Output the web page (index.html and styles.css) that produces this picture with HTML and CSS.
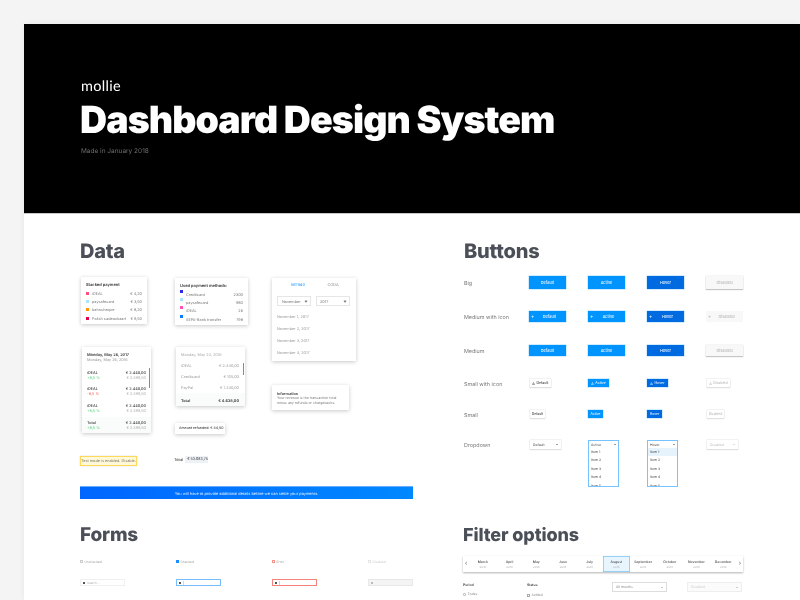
FILE: index.html
```html
<!DOCTYPE html>
<html lang="en">
<head>
<meta charset="utf-8">
<title>Mollie Dashboard Design System</title>
<link rel="stylesheet" href="styles.css">
</head>
<body>
<div class="sheet">
  <header class="hero">
    <div class="logo">mollie</div>
    <h1 class="title">Dashboard Design System</h1>
    <p class="made">Made in January 2018</p>
  </header>
  <main class="content">
    <section class="col-left">
      <h2 class="heading">Data</h2>
      <div class="data-grid">
        <div class="data-col data-col-a">
          <div class="card card-stacked">
            <div class="card-title">Stacked payment</div>
            <div class="row"><span class="dot dot-pink"></span><span class="grow">iDEAL</span><span>€ 4,20</span></div>
            <div class="row"><span class="dot dot-sky"></span><span class="grow">paysafecard</span><span>€ 3,50</span></div>
            <div class="row"><span class="dot dot-orange"></span><span class="grow">bahncheque</span><span>€ 8,20</span></div>
            <div class="row"><span class="dot dot-red"></span><span class="grow">Polish cadeaukaart</span><span>€ 9,50</span></div>
          </div>
          <div class="card card-day">
            <div class="day-strong">Monday, May 26, 2017</div>
            <div class="day-sub">Monday, May 26, 2016</div>
            <div class="day-row"><div class="line strong"><span>iDEAL</span><span>€ 2.440,00</span></div><div class="line sub"><span class="up">+8,5 %</span><span>€ 2.399,50</span></div></div>
            <div class="day-row"><div class="line strong"><span>iDEAL</span><span>€ 2.440,00</span></div><div class="line sub"><span class="down">-8,5 %</span><span>€ 2.399,50</span></div></div>
            <div class="day-row"><div class="line strong"><span>iDEAL</span><span>€ 2.440,00</span></div><div class="line sub"><span class="up">+8,5 %</span><span>€ 2.399,50</span></div></div>
            <div class="day-total"><div class="line strong"><span>Total</span><span>€ 2.440,00</span></div><div class="line sub"><span class="up">+8,5 %</span><span>€ 2.399,50</span></div></div>
            <span class="scroll scroll-day"></span>
          </div>
          <div class="notice">Test mode is enabled. Disable.</div>
        </div>
        <div class="data-col data-col-b">
          <div class="card card-used">
            <div class="card-title">Used payment methods:</div>
            <div class="row"><span class="dot dot-indigo"></span><span class="grow">Creditcard</span><span>2300</span></div>
            <div class="row"><span class="dot dot-sky"></span><span class="grow">paysafecard</span><span>980</span></div>
            <div class="row"><span class="dot dot-magenta"></span><span class="grow">iDEAL</span><span>26</span></div>
            <div class="row"><span class="dot dot-blue"></span><span class="grow">SEPA-Bank transfer</span><span>798</span></div>
          </div>
          <div class="card card-muted">
            <div class="muted-date">Monday, May 24, 2016</div>
            <div class="muted-row"><span>iDEAL</span><span>€ 2.440,00</span></div>
            <div class="muted-row"><span>Creditcard</span><span>€ 105,00</span></div>
            <div class="muted-row"><span>PayPal</span><span>€ 1.240,00</span></div>
            <div class="muted-total"><span>Total</span><span>€ 4.638,00</span></div>
            <span class="scroll scroll-muted"></span>
          </div>
          <div class="card tooltip">Amount refunded: € 84,50</div>
          <div class="total-line"><span>Total</span><span class="chip">€ 53.083,75</span></div>
        </div>
        <div class="data-col data-col-c">
          <div class="card card-export">
            <div class="tabs"><span class="tab-on">MT940</span><span>CODA</span></div>
            <div class="selects">
              <div class="mini-select mini-wide"><span>November</span><span class="chev"></span></div>
              <div class="mini-select"><span>2017</span><span class="chev"></span></div>
            </div>
            <div class="date-item">November 1, 2017</div>
            <div class="date-item">November 2, 2017</div>
            <div class="date-item">November 3, 2017</div>
            <div class="date-item">November 4, 2017</div>
          </div>
          <div class="card card-info">
            <div class="info-title">Information</div>
            <div class="info-text">Your revenue is the transaction total<br>minus any refunds or chargebacks.</div>
          </div>
        </div>
      </div>
      <div class="banner">You will have to provide additional details before we can settle your payments.</div>
      <h2 class="heading heading-forms">Forms</h2>
      <div class="forms-grid">
        <div class="check"><span class="box"></span>Unchecked</div>
        <div class="check"><span class="box box-on"></span>Checked</div>
        <div class="check"><span class="box box-err"></span>Error</div>
        <div class="check check-off"><span class="box box-off"></span>Disabled</div>
        <div class="field"><span class="mag"></span>Search...</div>
        <div class="field field-focus"><span class="mag"></span>|</div>
        <div class="field field-err"><span class="mag"></span>|</div>
        <div class="field field-off"><span class="mag mag-off"></span></div>
      </div>
    </section>
    <section class="col-right">
      <h2 class="heading heading-buttons">Buttons</h2>
      <div class="btn-table">
        <div class="btn-row row-big">
          <span class="label">Big</span>
          <button class="btn big">Default</button><button class="btn big">Active</button><button class="btn big hover">Hover</button><button class="btn big off raised">Disabled</button>
        </div>
        <div class="btn-row row-medicon">
          <span class="label">Medium with icon</span>
          <button class="btn med"><span class="plus">+</span>Default</button><button class="btn med"><span class="plus">+</span>Active</button><button class="btn med hover"><span class="plus">+</span>Hover</button><button class="btn med off"><span class="plus">+</span>Disabled</button>
        </div>
        <div class="btn-row row-med">
          <span class="label">Medium</span>
          <button class="btn med">Default</button><button class="btn med">Active</button><button class="btn med hover">Hover</button><button class="btn med off raised">Disabled</button>
        </div>
        <div class="btn-row row-smicon">
          <span class="label">Small with icon</span>
          <button class="btn sm-icon white"><svg class="tri" viewBox="0 0 6 6"><path d="M3 1 5 5H1Z"/></svg>Default</button><button class="btn sm-icon"><svg class="tri" viewBox="0 0 6 6"><path d="M3 1 5 5H1Z"/></svg>Active</button><button class="btn sm-icon hover"><svg class="tri" viewBox="0 0 6 6"><path d="M3 1 5 5H1Z"/></svg>Hover</button><button class="btn sm-icon white off-sm"><svg class="tri" viewBox="0 0 6 6"><path d="M3 1 5 5H1Z"/></svg>Disabled</button>
        </div>
        <div class="btn-row row-sm">
          <span class="label">Small</span>
          <button class="btn sm white">Default</button><button class="btn sm">Active</button><button class="btn sm hover">Hover</button><button class="btn sm white off-sm">Disabled</button>
        </div>
        <div class="btn-row row-drop">
          <span class="label">Dropdown</span>
          <div class="drop"><div class="drop-head"><span>Default</span><span class="caret"></span></div></div>
          <div class="drop drop-open"><div class="drop-head"><span>Active</span><span class="caret"></span></div><div class="drop-item">Item 1</div><div class="drop-item">Item 2</div><div class="drop-item">Item 3</div><div class="drop-item">Item 4</div><div class="drop-item">Item 5</div></div>
          <div class="drop drop-open"><div class="drop-head"><span>Hover</span><span class="caret"></span></div><div class="drop-item drop-sel">Item 1</div><div class="drop-item">Item 2</div><div class="drop-item">Item 3</div><div class="drop-item">Item 4</div><div class="drop-item">Item 5</div></div>
          <div class="drop drop-off"><div class="drop-head"><span>Disabled</span><span class="caret"></span></div></div>
        </div>
      </div>
      <h2 class="heading heading-filter">Filter options</h2>
      <div class="months">
        <span class="arrow">‹</span>
        <div class="month"><b>March</b><i>2018</i></div>
        <div class="month"><b>April</b><i>2018</i></div>
        <div class="month"><b>May</b><i>2018</i></div>
        <div class="month"><b>June</b><i>2018</i></div>
        <div class="month"><b>July</b><i>2018</i></div>
        <div class="month month-on"><b>August</b><i>2018</i></div>
        <div class="month"><b>September</b><i>2018</i></div>
        <div class="month"><b>October</b><i>2018</i></div>
        <div class="month"><b>November</b><i>2018</i></div>
        <div class="month"><b>December</b><i>2018</i></div>
        <span class="arrow">›</span>
      </div>
      <div class="filters">
        <div class="filter-group"><div class="filter-title">Period</div><div class="radio"><span class="ring"></span>Today</div></div>
        <div class="filter-group filter-status"><div class="filter-title">Status</div><div class="radio radio-low"><span class="ring ring-sq"></span>Settled</div></div>
        <div class="filter-select"><span>All months</span><span class="caret caret-grey"></span></div>
        <div class="filter-select filter-off"><span>Disabled</span><span class="caret caret-grey"></span></div>
      </div>
    </section>
  </main>
</div>
</body>
</html>
```
FILE: styles.css
```css
* { box-sizing: border-box; }
html, body { margin: 0; height: 600px; overflow: hidden; }
body { background: #f4f4f4; font-family: Inter, "Liberation Sans", sans-serif; text-rendering: geometricPrecision; }
.sheet { margin: 24px 0 0 24px; background: #fff; height: 576px; box-shadow: 0 0 6px rgba(0,0,0,.06); overflow: hidden; }
.hero { background: #000; height: 190px; padding: 55px 0 0 57px; border-bottom: 1px solid #c9c9c9; color: #fff; }
.logo { font-family: Lato, sans-serif; font-size: 14.5px; line-height: 16px; letter-spacing: .3px; filter: blur(.25px); }
.title { margin: 4px 0 0 -1px; font-family: Inter, sans-serif; font-weight: 900; font-size: 37.5px; line-height: 43px; letter-spacing: -.92px; white-space: nowrap; filter: blur(.25px); }
.made { margin: 5px 0 0; font-size: 6.5px; line-height: 9px; color: #6d6d6d; filter: blur(.3px); }

.content { display: flex; padding-left: 56px; filter: blur(.3px); }
.col-left { width: 333px; flex: none; }
.col-right { width: 280px; flex: none; margin-left: 51px; }
.heading { margin: 26px 0 0; font-size: 20px; line-height: 22px; font-weight: 800; color: #4b4f57; letter-spacing: -.2px; }

.data-grid { display: grid; grid-template-columns: 95px 97px 1fr; margin-top: 15px; height: 209px; }
.data-col { display: flex; flex-direction: column; align-items: flex-start; }
.card { position: relative; background: #fff; box-shadow: 0 1px 4px rgba(0,0,0,.22); color: #777; font-size: 3.8px; }
.card-stacked { width: 66px; height: 47px; margin: 0 0 0 1px; padding: 5px; }
.card-title { color: #333; font-weight: 600; font-size: 4px; line-height: 5px; margin-bottom: 2px; }
.row { display: flex; align-items: center; height: 8.3px; gap: 3px; white-space: nowrap; }
.grow { flex: 1; }
.dot { width: 3px; height: 3px; flex: none; }
.dot-pink { background: #ff4f7b; }
.dot-sky { background: #a9e4ff; }
.dot-orange { background: #ff9800; }
.dot-red { background: #e6004c; }
.dot-indigo { background: #2a2ae8; transform: translateY(-3px); }
.dot-magenta { background: #ff4fb8; transform: translateY(-3px); }
.dot-blue { background: #0a7cff; transform: translateY(-3px); }
.card-used .dot-sky { transform: translateY(-3px); }
.card-used { width: 73px; height: 47px; margin: 1px 0 0 0; padding: 5px; }

.card-day { width: 69px; height: 86px; margin: 23px 0 0 2px; padding: 5px 5px 0; }
.day-strong { color: #333; font-weight: 600; font-size: 3.9px; line-height: 5px; }
.day-sub { color: #999; line-height: 5px; margin-bottom: 7.5px; }
.day-row { height: 16.5px; }
.line { display: flex; justify-content: space-between; line-height: 5px; white-space: nowrap; }
.line.strong { color: #333; font-weight: 500; }
.line.sub { color: #aaa; }
.up { color: #4fd27c; }
.down { color: #f0645a; }
.day-total { margin: -2px -5px 0; padding: 2.5px 5px 0; height: 16px; background: #fafbfb; }
.scroll { position: absolute; right: 1px; width: 1px; background: #8a8a8a; }
.scroll-day { top: 21px; height: 20px; }
.notice { margin: 23px 0 0; width: 57px; height: 10px; background: #fff8d9; border: 1px solid #ffd95c; font-size: 3.8px; line-height: 8px; text-align: center; color: #7c7560; white-space: nowrap; box-shadow: 0 0 2px rgba(0,0,0,.12); }

.card-muted { width: 69px; height: 59px; margin: 22px 0 0 1px; padding: 5px 6px 0 5px; color: #9a9a9a; }
.muted-date { line-height: 5px; margin-bottom: 6px; color: #aaa; }
.muted-row { display: flex; justify-content: space-between; height: 11px; line-height: 6px; white-space: nowrap; }
.muted-total { display: flex; justify-content: space-between; color: #444; font-weight: 700; margin: -3px -6px 0 -5px; padding: 4.5px 6px 0 5px; height: 13px; background: #fafbfb; white-space: nowrap; }
.scroll-muted { top: 16px; height: 12px; }
.tooltip { margin: 17px 0 0; width: 50px; height: 11px; padding-left: 4px; line-height: 11px; font-size: 3.5px; color: #444; font-weight: 500; white-space: nowrap; }
.total-line { display: flex; align-items: center; gap: 2px; margin: 22px 0 0 -1px; font-size: 3.9px; color: #444; font-weight: 500; }
.chip { background: #eef2f7; padding: 0 2px; height: 7px; line-height: 7px; width: 23px; white-space: nowrap; font-size: 3.6px; }

.card-export { width: 84px; height: 83px; margin-top: 1px; padding: 3px 6px 0 5px; color: #888; }
.tabs { display: flex; justify-content: space-around; height: 8px; line-height: 8px; padding-left: 3px; font-size: 3.9px; }
.tab-on { color: #2a9bff; font-weight: 500; }
.selects { display: flex; gap: 5px; margin-top: 7px; }
.mini-select { flex: 1; height: 10px; border: 1px solid #e6e6e6; display: flex; align-items: center; justify-content: space-between; padding: 0 3px; color: #777; }
.mini-wide { flex: none; width: 34px; padding-left: 4px; }
.chev { width: 2px; height: 2px; border-right: .6px solid #777; border-bottom: .6px solid #777; transform: rotate(45deg); }
.date-item { height: 12px; line-height: 12px; color: #9a9a9a; white-space: nowrap; }
.selects + .date-item { margin-top: 5px; }
.card-info { width: 77px; height: 25px; margin-top: 24px; padding: 6px 5px 0; color: #777; }
.info-title { color: #333; font-weight: 600; line-height: 5px; }
.info-text { line-height: 4.5px; white-space: nowrap; font-size: 3.5px; }

.banner { height: 13px; line-height: 13px; background: linear-gradient(90deg, #0066ff, #0088ff); border-top: 1px solid #66adff; color: #dcecff; font-size: 3.9px; text-align: center; white-space: nowrap; }
.heading-forms { margin-top: 25px; font-size: 19px; }
.forms-grid { display: grid; grid-template-columns: repeat(4, 45px); column-gap: 51px; row-gap: 15px; margin-top: 13px; }
.check { display: flex; align-items: center; gap: 2px; height: 5px; font-size: 3.2px; color: #999; white-space: nowrap; }
.check-off { color: #ccc; }
.box { width: 2.5px; height: 2.5px; border: .5px solid #ccc; flex: none; }
.box-on { background: #1b8fff; border-color: #1b8fff; }
.box-err { border-color: #f5938b; }
.box-off { border-color: #e5e5e5; }
.field { display: flex; align-items: center; gap: 2px; height: 7px; padding-left: 2px; border: 1px solid #f0f0f0; font-size: 3px; color: #aaa; }
.field-focus { border-color: #76bdff; color: #444; }
.field-err { border-color: #f5837b; color: #444; }
.field-off { background: #f4f4f4; border-color: #e8e8e8; }
.mag { width: 2px; height: 2px; background: #555; flex: none; }
.mag-off { background: #bbb; }

.btn-table { display: flex; flex-direction: column; margin-top: 14px; }
.btn-row { display: grid; grid-template-columns: 65px 59px 59px 59px 38px; align-items: start; }
.label { font-size: 5.4px; color: #777; white-space: nowrap; padding-top: 1.5px; }
.btn { display: flex; align-items: center; justify-content: center; margin: 0; padding: 0; border: 0; border-radius: 0; font-family: inherit; background: #0094ff; color: #eaf6ff; font-size: 3.9px; font-weight: 500; white-space: nowrap; box-shadow: 0 0 0 .5px #a8dbff; }
.hover { background: #006be0; }
.big { width: 37px; height: 13px; }
.med { width: 37px; height: 11px; position: relative; }
.off { background: #f8f8f8; color: #bbb; box-shadow: none; }
.raised { box-shadow: 0 1px 1px rgba(0,0,0,.2), 0 0 0 .5px #eee; }
.row-big { height: 35px; }
.row-big .label { line-height: 13px; }
.row-medicon { height: 34px; }
.row-medicon .label { line-height: 11px; }
.plus { position: absolute; left: 2px; font-size: 5px; line-height: 5px; }
.med:has(.plus) { padding-left: 4px; }
.row-med { height: 34px; }
.row-med .label { line-height: 11px; }
.row-smicon { height: 31px; }
.row-smicon .label { line-height: 8px; }
.sm-icon { width: 21px; height: 8px; gap: 1px; font-size: 3.5px; }
.tri { width: 3px; height: 3px; fill: none; stroke: currentColor; stroke-width: 1; }
.white { background: #fff; color: #444; margin-left: 1px; box-shadow: 0 0 0 .5px #e5e5e5, 0 1px 1px rgba(0,0,0,.15); }
.off-sm { color: #bbb; width: 23px; }
.row-sm { height: 30px; }
.row-sm .label { line-height: 8px; }
.sm { width: 15px; height: 8px; font-size: 3.3px; }
.row-sm .off-sm { width: 17px; }
.row-drop { height: 47px; }
.row-drop .label { line-height: 9px; }
.drop { width: 31px; font-size: 3.4px; color: #444; background: #fff; box-shadow: 0 0 0 .5px #e5e5e5, 0 1px 1px rgba(0,0,0,.15); margin-left: 1px; overflow: hidden; }
.drop-head { display: flex; align-items: center; justify-content: space-between; height: 9px; padding: 0 3px; }
.caret { width: 0; height: 0; border-left: 1.2px solid transparent; border-right: 1.2px solid transparent; border-top: 1.4px solid #444; }
.drop-open { height: 47px; margin-left: 0; border: 1px solid #76c3ff; box-shadow: none; }
.drop-open .drop-head { height: 7px; padding: 0 2px; }
.drop-item { height: 8.4px; line-height: 8.4px; padding-left: 2px; }
.drop-sel { background: #e6f3fd; }
.drop-off { color: #bbb; }
.drop-off .caret { border-top-color: #bbb; }

.heading-filter { margin: 38px 0 0 -1px; font-size: 18px; letter-spacing: -.1px; }
.months { display: flex; align-items: stretch; width: 280px; height: 16px; margin: 9px 0 0 -1px; background: #fff; box-shadow: 0 1px 2px rgba(0,0,0,.3); }
.arrow { width: 6.5px; flex: none; font-size: 6px; line-height: 15px; text-align: center; color: #666; }
.month { flex: 1; display: flex; flex-direction: column; align-items: center; justify-content: center; min-width: 0; }
.month b { font-size: 3.4px; line-height: 5px; font-weight: 500; color: #444; }
.month i { font-size: 2.9px; line-height: 4px; font-style: normal; color: #aaa; }
.month-on { background: #e8f5fd; box-shadow: inset 0 0 0 .7px #78c4f5; }
.filters { display: flex; align-items: flex-start; margin: 11px 0 0 -1px; }
.filter-group { width: 64px; }
.filter-status { width: 85px; }
.filter-title { font-size: 3.4px; line-height: 5px; color: #333; font-weight: 600; }
.radio { display: flex; align-items: center; gap: 2px; margin-top: 4px; font-size: 3.4px; color: #888; line-height: 5px; }
.radio-low { margin-top: 5px; }
.ring { width: 2.5px; height: 2.5px; border: .5px solid #aaa; border-radius: 50%; }
.ring-sq { border-radius: 0; }
.filter-select { width: 55px; height: 10px; margin-top: -1px; border: .7px solid #ddd; padding: 0 3px; display: flex; align-items: center; justify-content: space-between; font-size: 3.4px; color: #888; }
.filter-off { margin-left: 20px; background: #fbfbfb; border-color: #eee; color: #ccc; }
.caret-grey { border-top-color: #999; }
```
